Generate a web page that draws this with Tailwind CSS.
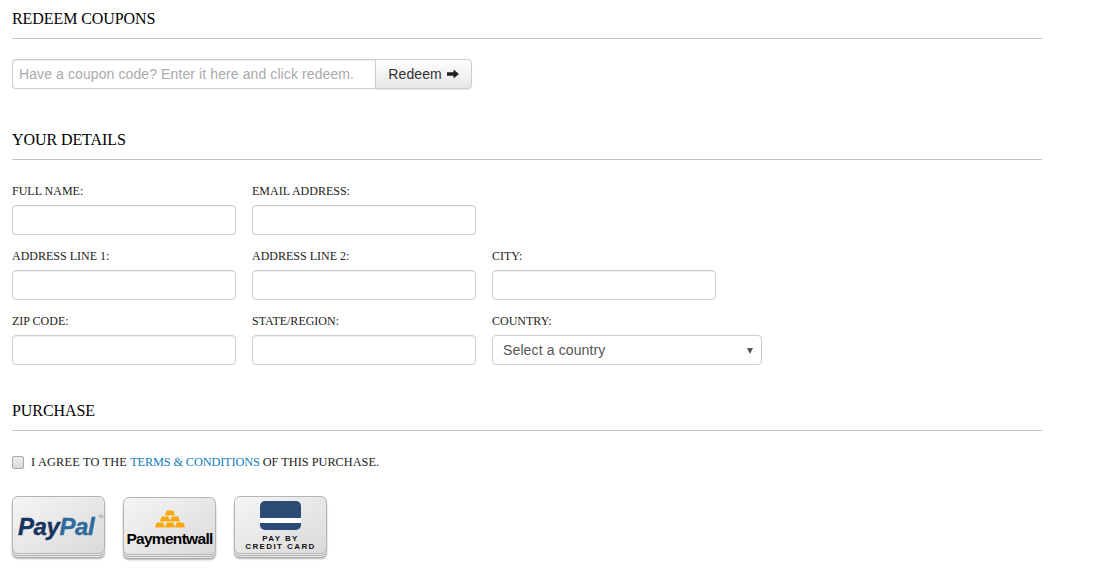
<!DOCTYPE html>
<html lang="en">
<head>
    <meta charset="UTF-8">
    <meta name="viewport" content="width=device-width, initial-scale=1.0">
    <title>Checkout</title>
    <script src="https://cdn.jsdelivr.net/npm/@tailwindcss/browser@4"></script>
</head>
<body class="bg-white font-['Liberation_Serif',serif] text-black">
<div class="w-[1030px] ml-3 pt-[9px] pb-[25px]">

    <!-- Redeem -->
    <h2 class="text-[16px] leading-[19px] tracking-[-0.08px] pb-[10px] border-b border-[#c4c4c4] h-[30px]">REDEEM COUPONS</h2>
    <div class="flex mt-[20px] w-[460px] h-[30px] font-['Liberation_Sans',sans-serif] text-[14px] tracking-[0.1px]">
        <input type="text" placeholder="Have a coupon code? Enter it here and click redeem." class="w-[364px] h-full px-[6px] border border-[#ccc] border-r-0 rounded-l-[4px] outline-none shadow-[inset_0_1px_1px_rgba(0,0,0,0.075)] placeholder:text-[#aaa]">
        <button class="w-[97px] h-full flex items-center justify-center gap-[5px] border border-[#ccc] rounded-r-[4px] bg-gradient-to-b from-white to-[#e6e6e6] text-[#333] shadow-[0_1px_1px_rgba(0,0,0,0.1)]">
            Redeem
            <svg width="12" height="10" viewBox="0 0 12 10"><path d="M0 3.3h6.5V0.5L12 5l-5.500 4.500V6.700H0z" fill="#222"/></svg>
        </button>
    </div>

    <!-- Details -->
    <h2 class="text-[16px] leading-[19px] tracking-[-0.08px] pb-[10px] border-b border-[#c4c4c4] h-[30px] mt-[41px]">YOUR DETAILS</h2>
    <div class="grid grid-cols-[224px_224px_270px] gap-x-4 gap-y-[11px] mt-[21px] text-[12px] leading-[20px] text-[#222]">
        <label class="flex flex-col gap-[4px] h-[54px]">FULL NAME:<input type="text" class="w-[224px] h-[30px] border border-[#ccc] rounded-[4px] shadow-[inset_0_1px_1px_rgba(0,0,0,0.075)]"></label>
        <label class="flex flex-col gap-[4px] h-[54px]">EMAIL ADDRESS:<input type="text" class="w-[224px] h-[30px] border border-[#ccc] rounded-[4px] shadow-[inset_0_1px_1px_rgba(0,0,0,0.075)]"></label>
        <div></div>
        <label class="flex flex-col gap-[4px] h-[54px]">ADDRESS LINE 1:<input type="text" class="w-[224px] h-[30px] border border-[#ccc] rounded-[4px] shadow-[inset_0_1px_1px_rgba(0,0,0,0.075)]"></label>
        <label class="flex flex-col gap-[4px] h-[54px]">ADDRESS LINE 2:<input type="text" class="w-[224px] h-[30px] border border-[#ccc] rounded-[4px] shadow-[inset_0_1px_1px_rgba(0,0,0,0.075)]"></label>
        <label class="flex flex-col gap-[4px] h-[54px]">CITY:<input type="text" class="w-[224px] h-[30px] border border-[#ccc] rounded-[4px] shadow-[inset_0_1px_1px_rgba(0,0,0,0.075)]"></label>
        <label class="flex flex-col gap-[4px] h-[54px]">ZIP CODE:<input type="text" class="w-[224px] h-[30px] border border-[#ccc] rounded-[4px] shadow-[inset_0_1px_1px_rgba(0,0,0,0.075)]"></label>
        <label class="flex flex-col gap-[4px] h-[54px]">STATE/REGION:<input type="text" class="w-[224px] h-[30px] border border-[#ccc] rounded-[4px] shadow-[inset_0_1px_1px_rgba(0,0,0,0.075)]"></label>
        <label class="flex flex-col gap-[4px] h-[54px]">COUNTRY:
            <div class="w-[270px] h-[30px] px-[10px] flex items-center justify-between border border-[#ccc] rounded-[4px] font-['Liberation_Sans',sans-serif] text-[14px] tracking-[0.13px] text-[#555]">
                <span>Select a country</span>
                <svg class="-mr-[2px]" width="6" height="7" viewBox="0 0 6 7"><path d="M0 1h6L3 7z" fill="#555"/></svg>
            </div>
        </label>
    </div>

    <!-- Purchase -->
    <h2 class="text-[16px] leading-[19px] tracking-[-0.08px] pb-[10px] border-b border-[#c4c4c4] h-[30px] mt-[36px]">PURCHASE</h2>
    <div class="flex items-center mt-[21px] h-[20px] text-[12.3px] text-[#222]">
        <span class="w-3 h-[13px] border border-[#aaa] rounded-[2px] bg-gradient-to-b from-[#eee] to-[#d8d8d8] mr-[7px]"></span>
        <span><span class="tracking-[0.2px]">I AGREE TO THE</span> <a class="text-[#0f7cb8] tracking-[-0.13px]" href="#">TERMS &amp; CONDITIONS</a> OF THIS PURCHASE.</span>
    </div>

    <!-- Payment options -->
    <div class="flex gap-[18px] mt-[24px] items-start">
        <button class="relative w-[93px] h-[58px] pl-[5px] pt-[3px] rounded-[6px] border border-[#b4b4b4] bg-gradient-to-br from-[#f5f5f5] to-[#dadada] shadow-[0_1px_0_#eee,0_2px_0_#aaa,0_3px_0_#eee,0_4px_0_#aaa,0_5px_2px_rgba(0,0,0,0.3)] flex items-center font-['Liberation_Sans',sans-serif] font-bold italic text-[24px] tracking-[-0.4px] [-webkit-text-stroke:0.4px]">
            <span class="text-[#17335f]">Pay</span><span class="text-[#2f6a9b]">Pal</span>
            <span class="absolute right-[1px] top-[17px] text-[4px] not-italic font-normal text-[#888] [-webkit-text-stroke:0px]">TM</span>
        </button>
        <button class="w-[93px] h-[58px] mt-px rounded-[6px] border border-[#b4b4b4] bg-gradient-to-br from-[#f5f5f5] to-[#dadada] shadow-[0_1px_0_#eee,0_2px_0_#aaa,0_3px_0_#eee,0_4px_0_#aaa,0_5px_2px_rgba(0,0,0,0.3)] flex flex-col items-center font-['Liberation_Sans',sans-serif] text-black">
            <svg class="mt-[12px] shrink-0" width="30" height="18" viewBox="0 0 30 18">
                <g fill="#f9a90f" stroke="#f9a90f" stroke-width="1" stroke-linejoin="round">
                    <path d="M12 1h6l1.500 4h-9zM7 7h6l1.500 4h-9zM17 7h6l1.500 4h-9zM2 13h6l1.500 4h-9zM12 13h6l1.500 4h-9zM22 13h6l1.500 4h-9z"/>
                </g>
            </svg>
            <span class="text-[15.500px] leading-[18px] font-bold tracking-[-0.7px] mt-[2px]">Paymentwall</span>
        </button>
        <button class="w-[93px] h-[58px] rounded-[6px] border border-[#b4b4b4] bg-gradient-to-br from-[#f5f5f5] to-[#dadada] shadow-[0_1px_0_#eee,0_2px_0_#aaa,0_3px_0_#eee,0_4px_0_#aaa,0_5px_2px_rgba(0,0,0,0.3)] flex flex-col items-center font-['Liberation_Sans',sans-serif] font-bold text-[8px] leading-[8px] tracking-[1.4px] text-[#111]">
            <svg class="mt-[4px] shrink-0" width="41" height="29" viewBox="0 0 41 29">
                <rect width="41" height="29" rx="5" fill="#2c4b74"/>
                <rect y="17" width="41" height="5" fill="#fff"/>
            </svg>
            <span class="mt-[5px]">PAY BY</span>
            <span>CREDIT CARD</span>
        </button>
    </div>
</div>
</body>
</html>
